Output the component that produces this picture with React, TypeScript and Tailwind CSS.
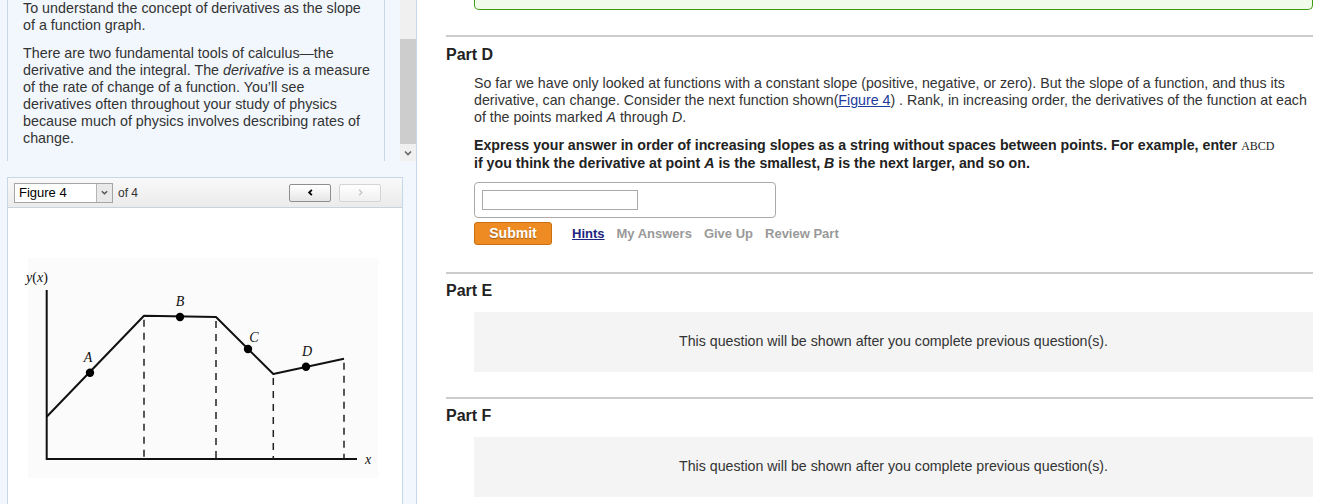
import React from 'react';

const ChevronDown = ({ className }: { className?: string }) => (
  <svg viewBox="0 0 10 10" className={className} fill="none" stroke="currentColor" strokeWidth="1.6">
    <path d="M2 3.5 L5 6.5 L8 3.5" />
  </svg>
);

const Graph = () => {
  const curve = '18.7,158.7 116,57.7 188,59 245.3,116 316,100.7';
  const dashes = [
    { x: 116, y: 57.7 },
    { x: 188, y: 59 },
    { x: 245.3, y: 116 },
    { x: 316, y: 100.7 },
  ];
  const points = [
    { x: 62, y: 114.7, label: 'A', lx: 60, ly: 104 },
    { x: 152, y: 59, label: 'B', lx: 152, ly: 48 },
    { x: 220, y: 91, label: 'C', lx: 226, ly: 84 },
    { x: 278, y: 108.7, label: 'D', lx: 279, ly: 98 },
  ];

  return (
    <svg width="358" height="220" viewBox="-8 0 358 220" className="block">
      <rect x="0" y="0" width="350" height="220" fill="#fbfbfb" />
      <g fontFamily="'Liberation Serif', serif" fill="#111">
        <text x="9" y="24" fontSize="14" textAnchor="middle">
          <tspan fontStyle="italic">y</tspan>(<tspan fontStyle="italic">x</tspan>)
        </text>
        <text x="337" y="206" fontSize="14" fontStyle="italic">x</text>
        {points.map((p) => (
          <text key={p.label} x={p.lx} y={p.ly} fontSize="14" fontStyle="italic" textAnchor="middle">
            {p.label}
          </text>
        ))}
      </g>
      <path d="M18.7 32 V201 H329" stroke="#111" strokeWidth="2" fill="none" />
      {dashes.map((d) => (
        <line key={d.x} x1={d.x} y1={d.y + 4} x2={d.x} y2={201} stroke="#222" strokeWidth="1.5" strokeDasharray="7 6" />
      ))}
      <polyline points={curve} stroke="#111" strokeWidth="2" fill="none" strokeLinejoin="round" />
      {points.map((p) => (
        <circle key={p.label} cx={p.x} cy={p.y} r="4.2" fill="#000" />
      ))}
    </svg>
  );
};

const LockedPart = ({ title }: { title: string }) => (
  <>
    <div className="h-[2px] bg-[#cccccc]" />
    <h2 className="mt-[7px] text-[16px] leading-[20px] font-bold text-[#222]">{title}</h2>
    <div className="mt-[11px] ml-[28px] h-[60px] bg-[#f4f4f4] flex items-center justify-center text-[14.2px] text-[#333]">
      This question will be shown after you complete previous question(s).
    </div>
  </>
);

export default function App() {
  return (
    <div className="flex h-[504px] w-[1334px] overflow-hidden bg-white font-['Liberation_Sans',Arial,sans-serif]">
      {/* left pane */}
      <aside className="w-[417px] shrink-0 border-r border-[#c6d7ea] bg-[#f2f7fd]">
        <div className="flex h-[161px]">
          <div className="ml-[7px] w-[378px] border-x border-[#c6d7ea] pl-[15px] pr-[4px] text-[14.3px] leading-[17px] text-[#333] whitespace-nowrap">
            <p>
              To understand the concept of derivatives as the slope
              <br />
              of a function graph.
            </p>
            <p className="mt-[11px]">
              There are two fundamental tools of calculus—the
              <br />
              derivative and the integral. The <em>derivative</em> is a measure
              <br />
              of the rate of change of a function. You’ll see
              <br />
              derivatives often throughout your study of physics
              <br />
              because much of physics involves describing rates of
              <br />
              change.
            </p>
          </div>
          <div className="ml-[15px] w-[16px] flex flex-col bg-[#f0f0f0]">
            <div className="h-[39px]" />
            <div className="h-[105px] bg-[#cdcdcd]" />
            <div className="flex-1 flex items-center justify-center text-[#666]">
              <ChevronDown className="w-[10px] h-[10px]" />
            </div>
          </div>
        </div>

        <div className="mt-[16px] ml-[7px] w-[396px] h-[400px] border border-[#c6d7ea] bg-white">
          <div className="h-[30px] flex items-center border-b border-[#c9d3dd] bg-gradient-to-b from-[#f9f9f9] to-[#ebebeb] pl-[6px] pr-[21px]">
            <div className="flex h-[20px] w-[99px] border border-[#a5a5a5] bg-white">
              <span className="flex-1 pl-[4px] text-[13px] leading-[18px] text-black">Figure 4</span>
              <span className="w-[16px] flex items-center justify-center border-l border-[#b5b5b5] bg-[#e9e9e9] text-[#555]">
                <ChevronDown className="w-[9px] h-[9px]" />
              </span>
            </div>
            <span className="ml-[5px] text-[12px] text-[#333]">of 4</span>
            <div className="ml-auto flex gap-[8px]">
              <button className="w-[42px] h-[18px] flex items-center justify-center rounded-[2px] border border-[#8f8f8f] bg-gradient-to-b from-white to-[#e6e6e6] text-black">
                <svg viewBox="0 0 10 10" className="w-[9px] h-[9px]" fill="none" stroke="currentColor" strokeWidth="2">
                  <path d="M6.5 2 L3.5 5 L6.5 8" />
                </svg>
              </button>
              <button className="w-[42px] h-[18px] flex items-center justify-center rounded-[2px] border border-[#d4d4d4] bg-gradient-to-b from-white to-[#f0f0f0] text-[#c4c4c4]">
                <svg viewBox="0 0 10 10" className="w-[9px] h-[9px]" fill="none" stroke="currentColor" strokeWidth="1.4">
                  <path d="M3.5 2 L6.5 5 L3.5 8" />
                </svg>
              </button>
            </div>
          </div>
          <div className="pt-[50px] pl-[12px]">
            <Graph />
          </div>
        </div>
      </aside>

      {/* right pane */}
      <main className="flex-1 pl-[29px] pr-[21px]">
        <div className="ml-[28px] h-[10px] rounded-b-[5px] border-x border-b border-[#3c9a14] bg-[#f1fbe9]" />
        <div className="mt-[25px] h-[2px] bg-[#cccccc]" />
        <h2 className="mt-[8px] text-[16px] leading-[20px] font-bold text-[#222]">Part D</h2>
        <div className="ml-[28px] text-[14.2px] leading-[17px] text-[#333] whitespace-nowrap">
          <p className="mt-[10px]">
            So far we have only looked at functions with a constant slope (positive, negative, or zero). But the slope of a
            function, and thus its
            <br />
            derivative, can change. Consider the next function shown(
            <a className="text-[#1a3b9c] underline">Figure 4</a>) . Rank, in increasing order, the derivatives of the function
            at each
            <br />
            of the points marked <em>A</em> through <em>D</em>.
          </p>
          <p className="mt-[11px] font-bold text-[#222]">
            Express your answer in order of increasing slopes as a string without spaces between points. For example, enter{' '}
            <span className="font-['Liberation_Serif',serif] font-normal text-[12px]">ABCD</span>
            <br />
            if you think the derivative at point <em>A</em> is the smallest, <em>B</em> is the next larger, and so on.
          </p>
          <div className="mt-[10px] w-[302px] h-[36px] rounded-[4px] border border-[#aaaaaa] pt-[7px] pl-[7px]">
            <div className="w-[156px] h-[20px] border border-[#aaaaaa] bg-white" />
          </div>
          <div className="mt-[4px] flex items-center">
            <button className="w-[78px] h-[23px] rounded-[3px] border border-[#c96f12] bg-[#ee8b22] text-[14px] font-bold text-white [text-shadow:0_1px_1px_rgba(0,0,0,0.35)]">
              Submit
            </button>
            <div className="ml-[20px] flex gap-[12px] text-[13px] font-bold text-[#999]">
              <a className="text-[#1c2580] underline">Hints</a>
              <span>My Answers</span>
              <span>Give Up</span>
              <span>Review Part</span>
            </div>
          </div>
        </div>
        <div className="mt-[27px]">
          <LockedPart title="Part E" />
        </div>
        <div className="mt-[25px]">
          <LockedPart title="Part F" />
        </div>
      </main>
    </div>
  );
}
